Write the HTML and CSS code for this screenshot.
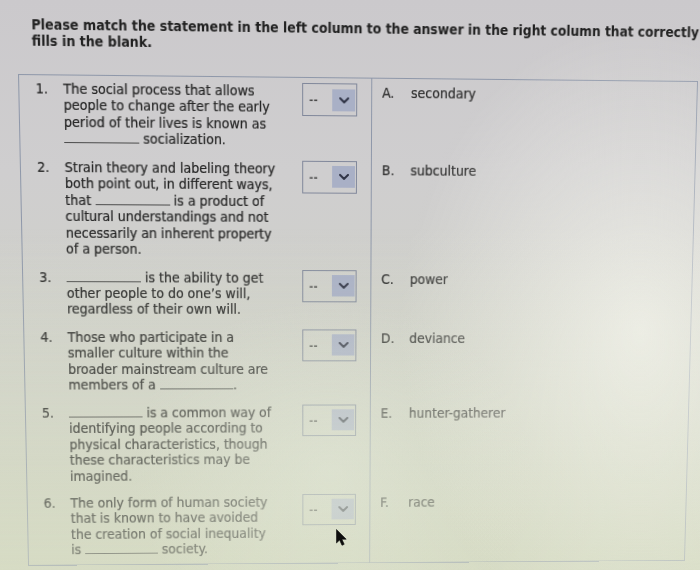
FILE: index.html
```html
<!DOCTYPE html>
<html lang="en">
<head>
<meta charset="utf-8">
<title>Matching</title>
<link rel="stylesheet" href="styles.css">
</head>
<body>
<div class="screen">
  <div class="sheet">
    <p class="prompt">Please match the statement in the left column to the answer in the right column that correctly<br>fills in the blank.</p>

    <div class="match">
      <div class="item">
        <span class="num">1.</span>
        <p class="stem">The social process that allows<br>people to change after the early<br>period of their lives is known as<br><span class="blank"></span> socialization.</p>
        <div class="pick"><span class="dash">--</span><span class="arrow"><svg viewBox="0 0 10 6" width="10" height="6"><polyline points="1,1 5,5 9,1"/></svg></span></div>
      </div>
      <div class="answer"><span class="key">A.</span><span>secondary</span></div>

      <div class="item">
        <span class="num">2.</span>
        <p class="stem">Strain theory and labeling theory<br>both point out, in different ways,<br>that <span class="blank"></span> is a product of<br>cultural understandings and not<br>necessarily an inherent property<br>of a person.</p>
        <div class="pick"><span class="dash">--</span><span class="arrow"><svg viewBox="0 0 10 6" width="10" height="6"><polyline points="1,1 5,5 9,1"/></svg></span></div>
      </div>
      <div class="answer"><span class="key">B.</span><span>subculture</span></div>

      <div class="item">
        <span class="num">3.</span>
        <p class="stem"><span class="blank"></span> is the ability to get<br>other people to do one’s will,<br>regardless of their own will.</p>
        <div class="pick"><span class="dash">--</span><span class="arrow"><svg viewBox="0 0 10 6" width="10" height="6"><polyline points="1,1 5,5 9,1"/></svg></span></div>
      </div>
      <div class="answer"><span class="key">C.</span><span>power</span></div>

      <div class="item">
        <span class="num">4.</span>
        <p class="stem">Those who participate in a<br>smaller culture within the<br>broader mainstream culture are<br>members of a <span class="blank"></span>.</p>
        <div class="pick"><span class="dash">--</span><span class="arrow"><svg viewBox="0 0 10 6" width="10" height="6"><polyline points="1,1 5,5 9,1"/></svg></span></div>
      </div>
      <div class="answer"><span class="key">D.</span><span>deviance</span></div>

      <div class="item">
        <span class="num">5.</span>
        <p class="stem"><span class="blank"></span> is a common way of<br>identifying people according to<br>physical characteristics, though<br>these characteristics may be<br>imagined.</p>
        <div class="pick"><span class="dash">--</span><span class="arrow"><svg viewBox="0 0 10 6" width="10" height="6"><polyline points="1,1 5,5 9,1"/></svg></span></div>
      </div>
      <div class="answer"><span class="key">E.</span><span>hunter-gatherer</span></div>

      <div class="item">
        <span class="num">6.</span>
        <p class="stem">The only form of human society<br>that is known to have avoided<br>the creation of social inequality<br>is <span class="blank"></span> society.</p>
        <div class="pick"><span class="dash">--</span><span class="arrow"><svg viewBox="0 0 10 6" width="10" height="6"><polyline points="1,1 5,5 9,1"/></svg></span></div>
      </div>
      <div class="answer"><span class="key">F.</span><span>race</span></div>
    </div>
  </div>

  <div class="glare"></div>

  <svg class="cursor" viewBox="0 0 11 17" width="11" height="17">
    <path d="M0.5 0.5 L0.5 14 L3.6 11 L6 16.3 L8.2 15.3 L5.9 10.2 L10.2 10.2 Z"/>
  </svg>
</div>
</body>
</html>
```

FILE: styles.css
```css
html,
body {
  margin: 0;
  height: 100%;
  overflow: hidden;
}

body {
  font-family: "DejaVu Sans Condensed", "DejaVu Sans", sans-serif;
  color: #262626;
  background:
    linear-gradient(to bottom, #cbc9cc 0%, #cfcecf 30%, #d0d2c7 70%, #cdd1bb 100%);
}

.screen {
  position: relative;
  width: 700px;
  height: 570px;
  overflow: hidden;
}

/* the monitor is seen slightly from above: keystone the whole sheet */
.sheet {
  padding-top: 17px;
  transform-origin: 18px 74px;
  transform: matrix3d(1.025476, 0.010556, 0, 0.000037465,
                      0.02071, 1.0148, 0, 0.000071024,
                      0, 0, 1, 0,
                      0, 0, 0, 1);
}

.prompt {
  margin: 0 0 25px 32px;
  font-weight: bold;
  font-size: 13.8px;
  line-height: 16px;
  white-space: nowrap;
  color: #202020;
}

.match {
  margin-left: 18px;
  width: 680px;
  box-sizing: border-box;
  border: 1px solid #8e97a9;
  display: grid;
  grid-template-columns: 348px 1fr;
  font-size: 14px;
  line-height: 16.45px;
  -webkit-text-stroke: 0.2px currentColor;
}

.item {
  display: flex;
  align-items: flex-start;
  padding: 5px 0 7px 16px;
}

.num {
  flex: none;
  width: 27px;
}

.stem {
  flex: none;
  width: 236px;
  margin: 0;
  white-space: nowrap;
}

.blank {
  display: inline-block;
  width: 74px;
  height: 12px;
  border-bottom: 1px solid #4a4a4a;
}

.pick {
  flex: none;
  display: flex;
  align-items: center;
  width: 55px;
  height: 33px;
  box-sizing: border-box;
  border: 1px solid #80879a;
  -webkit-text-stroke: 0;
}

.dash {
  padding-left: 6px;
  font-size: 11px;
  font-weight: bold;
  letter-spacing: 0.5px;
  line-height: 1;
  color: #444;
}

.arrow {
  display: flex;
  align-items: center;
  justify-content: center;
  width: 23px;
  height: 22px;
  margin-left: auto;
  margin-right: 1px;
  background: #a9b0c6;
}

.arrow polyline {
  fill: none;
  stroke: #2e3244;
  stroke-width: 2;
  stroke-linecap: round;
  stroke-linejoin: round;
}

.answer {
  display: flex;
  padding: 6px 0 0 10px;
  border-left: 1px solid #8e97a9;
  color: #2e2e2e;
}

.key {
  flex: none;
  width: 29px;
}

/* light from the room washing over the lower half of the screen */
.glare {
  position: absolute;
  inset: 0;
  pointer-events: none;
  background:
    radial-gradient(ellipse 240px 310px at 640px 330px, rgba(252, 252, 244, 0.62), rgba(252, 252, 244, 0) 100%),
    radial-gradient(ellipse 200px 170px at 330px 470px, rgba(232, 238, 222, 0.4), rgba(232, 238, 222, 0) 100%),
    linear-gradient(to bottom, rgba(224, 230, 206, 0) 40%, rgba(224, 230, 206, 0.5) 100%);
}

.cursor {
  position: absolute;
  left: 336px;
  top: 529px;
}

.cursor path {
  fill: #0d0d0d;
  stroke: #0d0d0d;
  stroke-width: 0.6;
}
```
